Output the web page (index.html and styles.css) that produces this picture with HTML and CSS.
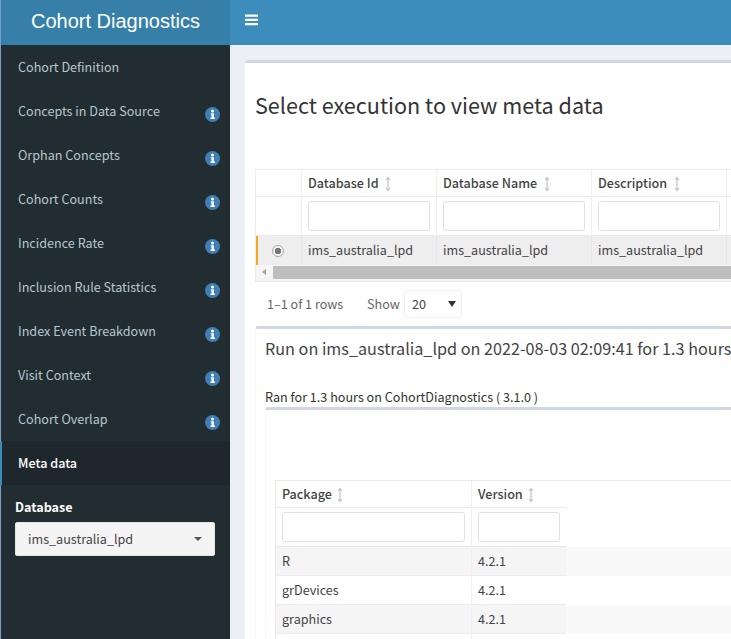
FILE: index.html
```html
<!DOCTYPE html>
<html lang="en">
<head>
    <meta charset="UTF-8">
    <title>Cohort Diagnostics</title>
    <link rel="stylesheet" href="styles.css">
</head>
<body>
    <svg class="icon-defs" width="0" height="0">
        <symbol id="sort" viewBox="0 0 8 16">
            <path d="M4 1.5V14.5M2 4L4 1.5L6 4M2 12L4 14.5L6 12" fill="none" stroke="#c4c4c4" stroke-width="1.2"/>
        </symbol>
        <symbol id="info" viewBox="0 0 15 15">
            <circle cx="7.5" cy="7.5" r="7.5" fill="#3f7fb5"/>
            <circle cx="7.5" cy="3.9" r="1.5" fill="#fff"/>
            <path d="M5.8 6.2H8.9V10.6H9.9V12H5.5V10.6H6.5V7.6H5.8Z" fill="#fff"/>
        </symbol>
    </svg>

    <header class="top-bar">
        <div class="logo">Cohort Diagnostics</div>
        <div class="navbar">
            <svg class="burger" width="13" height="12" viewBox="0 0 13 12">
                <path d="M0 .5H13V2.7H0ZM0 4.8H13V7H0ZM0 9.1H13V11.3H0Z" fill="#fff"/>
            </svg>
        </div>
    </header>

    <div class="page">
        <aside class="sidebar">
            <nav class="menu">
                <a class="menu-item">Cohort Definition</a>
                <a class="menu-item">Concepts in Data Source <svg class="info"><use href="#info"/></svg></a>
                <a class="menu-item">Orphan Concepts <svg class="info"><use href="#info"/></svg></a>
                <a class="menu-item">Cohort Counts <svg class="info"><use href="#info"/></svg></a>
                <a class="menu-item">Incidence Rate <svg class="info"><use href="#info"/></svg></a>
                <a class="menu-item">Inclusion Rule Statistics <svg class="info"><use href="#info"/></svg></a>
                <a class="menu-item">Index Event Breakdown <svg class="info"><use href="#info"/></svg></a>
                <a class="menu-item">Visit Context <svg class="info"><use href="#info"/></svg></a>
                <a class="menu-item">Cohort Overlap <svg class="info"><use href="#info"/></svg></a>
                <a class="menu-item active">Meta data</a>
            </nav>
            <div class="db-picker">
                <label class="db-label">Database</label>
                <div class="db-select">ims_australia_lpd<span class="db-caret"></span></div>
            </div>
        </aside>

        <main class="content">
            <section class="box">
                <h3 class="box-title">Select execution to view meta data</h3>

                <div class="grid-wrap">
                    <table class="grid executions">
                        <colgroup>
                            <col class="c-select"><col class="c-id"><col class="c-name"><col class="c-desc"><col class="c-rest">
                        </colgroup>
                        <tr class="head">
                            <th></th>
                            <th>Database Id <svg class="sort"><use href="#sort"/></svg></th>
                            <th>Database Name <svg class="sort"><use href="#sort"/></svg></th>
                            <th>Description <svg class="sort"><use href="#sort"/></svg></th>
                            <th></th>
                        </tr>
                        <tr class="filters">
                            <td></td>
                            <td><input class="filter" type="text"></td>
                            <td><input class="filter" type="text"></td>
                            <td><input class="filter" type="text"></td>
                            <td></td>
                        </tr>
                        <tr class="row selected">
                            <td class="radio-cell"><span class="radio"></span></td>
                            <td>ims_australia_lpd</td>
                            <td>ims_australia_lpd</td>
                            <td>ims_australia_lpd</td>
                            <td></td>
                        </tr>
                    </table>
                    <div class="scrollbar">
                        <span class="scroll-btn"></span>
                        <span class="scroll-thumb"></span>
                    </div>
                </div>

                <div class="pager">
                    <span class="pager-count">1–1 of 1 rows</span>
                    <span class="pager-show">Show</span>
                    <div class="pager-select">20<span class="pager-caret"></span></div>
                </div>

                <section class="run-box">
                    <div class="run-title">Run on ims_australia_lpd on 2022-08-03 02:09:41 for 1.3 hours</div>
                    <div class="run-note">Ran for 1.3 hours on CohortDiagnostics ( 3.1.0 )</div>

                    <div class="package-box">
                        <table class="grid packages">
                            <colgroup>
                                <col class="c-package"><col class="c-version"><col class="c-blank">
                            </colgroup>
                            <tr class="head">
                                <th>Package <svg class="sort tight"><use href="#sort"/></svg></th>
                                <th class="last">Version <svg class="sort tight"><use href="#sort"/></svg></th>
                                <th class="blank"></th>
                            </tr>
                            <tr class="filters">
                                <td><input class="filter" type="text"></td>
                                <td class="last"><input class="filter" type="text"></td>
                                <td class="blank"></td>
                            </tr>
                            <tr class="row odd"><td>R</td><td class="last">4.2.1</td><td class="blank"></td></tr>
                            <tr class="row"><td>grDevices</td><td class="last">4.2.1</td><td class="blank"></td></tr>
                            <tr class="row odd"><td>graphics</td><td class="last">4.2.1</td><td class="blank"></td></tr>
                            <tr class="row"><td></td><td class="last"></td><td class="blank"></td></tr>
                        </table>
                    </div>
                </section>
            </section>
        </main>
    </div>
</body>
</html>
```

FILE: styles.css
```css
* {
    margin: 0;
    padding: 0;
    box-sizing: border-box;
}

html, body {
    width: 731px;
    height: 639px;
    overflow: hidden;
}

body {
    font-family: "Noto Sans CJK KR", "Noto Sans", sans-serif;
    font-size: 12.6px;
    line-height: 20px;
    color: #333;
    background: #ecf0f5;
    display: flex;
    flex-direction: column;
}

.icon-defs {
    position: absolute;
}

/* top bar */
.top-bar {
    display: flex;
    height: 45px;
    flex: none;
}

.logo {
    width: 230px;
    background: #367fa9;
    color: #fff;
    font-family: "Liberation Sans", Arial, sans-serif;
    font-size: 20px;
    line-height: 42px;
    text-align: center;
    border-left: 1px solid #7a9ad0;
}

.navbar {
    flex: 1;
    background: #3c8dbc;
    display: flex;
    align-items: center;
    padding: 0 0 6px 15px;
}

.page {
    flex: 1;
    display: flex;
    min-height: 0;
}

/* sidebar */
.sidebar {
    width: 230px;
    flex: none;
    background: #222d32;
    border-left: 1px solid #7a9ad0;
}

.menu-item {
    position: relative;
    display: block;
    height: 44px;
    padding: 12px 0 0 17px;
    color: #b8c7ce;
    line-height: 20px;
}

.menu-item.active {
    background: #1e282c;
    color: #fff;
    font-weight: 500;
    border-left: 2px solid #3c8dbc;
    margin-left: -1px;
    padding-left: 16px;
}

.info {
    position: absolute;
    right: 10px;
    top: 18px;
    width: 15px;
    height: 15px;
}

.db-picker {
    padding: 12px 15px 0 14px;
}

.db-label {
    display: block;
    color: #fff;
    font-weight: 700;
    line-height: 20px;
    margin-bottom: 5px;
}

.db-select {
    position: relative;
    width: 200px;
    height: 34px;
    background: #f4f4f4;
    border: 1px solid #e4e4e4;
    border-radius: 2px;
    color: #444;
    padding: 6px 0 0 12px;
}

.db-caret {
    position: absolute;
    right: 12px;
    top: 14px;
    border-left: 4px solid transparent;
    border-right: 4px solid transparent;
    border-top: 4px solid #555;
}

/* main content */
.content {
    flex: 1;
    min-width: 0;
    padding: 15px 0 0 15px;
    overflow: hidden;
}

.box {
    width: 560px;
    height: 700px;
    background: #fff;
    border-top: 3px solid #d2d6de;
    border-radius: 3px 0 0 0;
    padding: 0 0 0 10px;
}

.box-title {
    font-size: 21.6px;
    font-weight: 400;
    line-height: 26px;
    color: #333;
    margin: 29px 0 51px;
}

.grid {
    border-collapse: separate;
    border-spacing: 0;
    table-layout: fixed;
}

.grid th {
    height: 27px;
    padding: 0 7px 0 6px;
    text-align: left;
    font-weight: 500;
    color: #444;
    white-space: nowrap;
    border-bottom: 1px solid #e9e9e9;
    border-right: 1px solid #f0f0f0;
}

.grid td {
    padding: 0 6px;
    color: #444;
    white-space: nowrap;
    border-right: 1px solid #f0f0f0;
}

.sort {
    width: 8px;
    height: 16px;
    vertical-align: -4px;
    margin-left: 3px;
}

.sort.tight {
    margin-left: 1px;
}

.filters td {
    height: 39px;
    border-bottom: 1px solid #e9e9e9;
}

.filter {
    display: block;
    width: 100%;
    height: 30px;
    background: #fff;
    border: 1px solid #e1e1e1;
    border-radius: 3px;
}

/* executions table */
.grid-wrap {
    width: 476px;
    border: 1px solid #ececec;
    border-right: 0;
    overflow: hidden;
}

.executions {
    width: 520px;
}

.c-select { width: 46px; }
.c-id { width: 135px; }
.c-name { width: 155px; }
.c-desc { width: 135px; }
.c-rest { width: 49px; }

.selected td {
    height: 29px;
    padding-bottom: 2px;
    background: #eee;
    border-right-color: #e6e6e6;
}

.selected .radio-cell {
    border-left: 2px solid #f5a623;
    padding: 0 3px 0 0;
    text-align: center;
}

.radio {
    display: inline-block;
    width: 12px;
    height: 12px;
    border: 1px solid #a9a9a9;
    border-radius: 50%;
    background: radial-gradient(circle, #777 0, #777 3px, #f4f4f4 3.5px);
    vertical-align: -1px;
}

.scrollbar {
    display: flex;
    height: 16px;
    padding: 1px 0 2px;
    background: #f5f5f5;
}

.scroll-btn {
    position: relative;
    width: 17px;
    flex: none;
}

.scroll-btn::before {
    content: "";
    position: absolute;
    left: 6px;
    top: 3px;
    border-top: 3px solid transparent;
    border-bottom: 3px solid transparent;
    border-right: 4px solid #a3a3a3;
}

.scroll-thumb {
    flex: 1;
    background: #bdbdbd;
}

/* pager */
.pager {
    display: flex;
    align-items: center;
    height: 44px;
    padding-left: 12px;
    color: #666;
}

.pager-count {
    width: 100px;
}

.pager-show {
    width: 37px;
}

.pager-select {
    position: relative;
    width: 58px;
    height: 28px;
    border: 1px solid #f0f0f0;
    border-radius: 3px;
    color: #444;
    padding: 3px 0 0 7px;
}

.pager-caret {
    position: absolute;
    right: 5px;
    top: 10px;
    border-left: 4px solid transparent;
    border-right: 4px solid transparent;
    border-top: 6px solid #333;
}

/* run section */
.run-box {
    border-top: 3px solid #d2d6de;
    border-left: 1px solid #f7f7f7;
    border-radius: 3px 0 0 0;
    padding-left: 9px;
}

.run-title {
    font-size: 16.2px;
    line-height: 24px;
    color: #444;
    margin-top: 7px;
    white-space: nowrap;
}

.run-note {
    line-height: 20px;
    color: #333;
    margin-top: 27px;
    white-space: nowrap;
}

.package-box {
    border-top: 3px solid #d2d6de;
    border-left: 1px solid #f7f7f7;
    border-radius: 3px 0 0 0;
    padding: 70px 0 0 9px;
}

.packages {
    width: 456px;
    border-top: 1px solid #e9e9e9;
    border-left: 1px solid #e9e9e9;
}

.c-package { width: 196px; }
.c-version { width: 94px; }
.c-blank { width: 166px; }

.packages .row td {
    height: 29px;
    border-bottom: 1px solid #ededed;
}

.packages .row.odd td {
    background: #f5f5f5;
}

.packages .last {
    border-right: 0;
}

.packages .blank {
    border-right: 0;
    border-bottom: 0;
}

.packages .row td.blank {
    border-bottom: 0;
}

.packages .row.odd td.blank {
    background: #f9f9f9;
}

.packages .row td.last {
    border-right: 0;
}
```
